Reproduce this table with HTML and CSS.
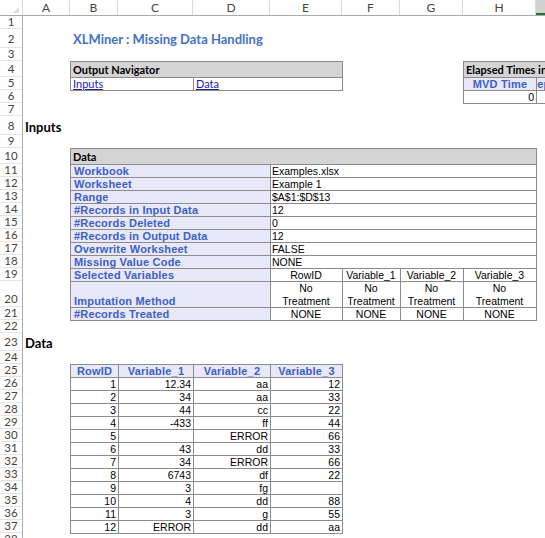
FILE: index.html
```html
<!DOCTYPE html>
<html>
<head>
<meta charset="utf-8">
<link rel="stylesheet" href="styles.css">
</head>
<body>
<div class="sheet">
  <div class="colhead">
    <div class="corner"><span class="tri"></span></div>
    <div class="ch w-a">A</div>
    <div class="ch w-b">B</div>
    <div class="ch w-c">C</div>
    <div class="ch w-d">D</div>
    <div class="ch w-e">E</div>
    <div class="ch w-f">F</div>
    <div class="ch w-g">G</div>
    <div class="ch w-h">H</div>
    <div class="ch ch-sel"></div>
  </div>
  <div class="body">
    <div class="rownums">
      <div class="rn">1</div>
      <div class="rn h19">2</div>
      <div class="rn">3</div>
      <div class="rn h16">4</div>
      <div class="rn">5</div>
      <div class="rn">6</div>
      <div class="rn">7</div>
      <div class="rn h19">8</div>
      <div class="rn">9</div>
      <div class="rn h16">10</div>
      <div class="rn">11</div>
      <div class="rn">12</div>
      <div class="rn">13</div>
      <div class="rn">14</div>
      <div class="rn">15</div>
      <div class="rn">16</div>
      <div class="rn">17</div>
      <div class="rn">18</div>
      <div class="rn">19</div>
      <div class="rn h26">20</div>
      <div class="rn">21</div>
      <div class="rn">22</div>
      <div class="rn h18">23</div>
      <div class="rn">24</div>
      <div class="rn">25</div>
      <div class="rn">26</div>
      <div class="rn">27</div>
      <div class="rn">28</div>
      <div class="rn">29</div>
      <div class="rn">30</div>
      <div class="rn">31</div>
      <div class="rn">32</div>
      <div class="rn">33</div>
      <div class="rn">34</div>
      <div class="rn">35</div>
      <div class="rn">36</div>
      <div class="rn">37</div>
      <div class="rn">38</div>
    </div>
    <div class="grid">
      <div class="title">XLMiner : Missing Data Handling</div>

      <div class="tbl nav">
        <div class="c hd span-all">Output Navigator</div>
        <div class="c link-cell"><a href="#inputs">Inputs</a></div>
        <div class="c link-cell"><a href="#data">Data</a></div>
      </div>

      <div class="tbl elapsed">
        <div class="c hd span-all">Elapsed Times in Milliseconds</div>
        <div class="c lbl ctr">MVD Time</div>
        <div class="c lbl clip-left">Report Time</div>
        <div class="c r">0</div>
        <div class="c"></div>
      </div>

      <div class="heading h-inputs" id="inputs">Inputs</div>

      <div class="tbl inputs">
        <div class="c hd span-all">Data</div>
        <div class="c lbl">Workbook</div><div class="c val span-rest">Examples.xlsx</div>
        <div class="c lbl">Worksheet</div><div class="c val span-rest">Example 1</div>
        <div class="c lbl">Range</div><div class="c val span-rest">$A$1:$D$13</div>
        <div class="c lbl">#Records in Input Data</div><div class="c val span-rest">12</div>
        <div class="c lbl">#Records Deleted</div><div class="c val span-rest">0</div>
        <div class="c lbl">#Records in Output Data</div><div class="c val span-rest">12</div>
        <div class="c lbl">Overwrite Worksheet</div><div class="c val span-rest">FALSE</div>
        <div class="c lbl">Missing Value Code</div><div class="c val span-rest">NONE</div>
        <div class="c lbl">Selected Variables</div>
        <div class="c ctr">RowID</div><div class="c ctr">Variable_1</div><div class="c ctr">Variable_2</div><div class="c ctr">Variable_3</div>
        <div class="c lbl bottom">Imputation Method</div>
        <div class="c ctr two">No<br>Treatment</div><div class="c ctr two">No<br>Treatment</div><div class="c ctr two">No<br>Treatment</div><div class="c ctr two">No<br>Treatment</div>
        <div class="c lbl">#Records Treated</div>
        <div class="c ctr">NONE</div><div class="c ctr">NONE</div><div class="c ctr">NONE</div><div class="c ctr">NONE</div>
      </div>

      <div class="heading h-data" id="data">Data</div>

      <div class="tbl data">
        <div class="c lbl ctr">RowID</div><div class="c lbl ctr">Variable_1</div><div class="c lbl ctr">Variable_2</div><div class="c lbl ctr">Variable_3</div>
        <div class="c r">1</div><div class="c r">12.34</div><div class="c r">aa</div><div class="c r">12</div>
        <div class="c r">2</div><div class="c r">34</div><div class="c r">aa</div><div class="c r">33</div>
        <div class="c r">3</div><div class="c r">44</div><div class="c r">cc</div><div class="c r">22</div>
        <div class="c r">4</div><div class="c r">-433</div><div class="c r">ff</div><div class="c r">44</div>
        <div class="c r">5</div><div class="c r"></div><div class="c r">ERROR</div><div class="c r">66</div>
        <div class="c r">6</div><div class="c r">43</div><div class="c r">dd</div><div class="c r">33</div>
        <div class="c r">7</div><div class="c r">34</div><div class="c r">ERROR</div><div class="c r">66</div>
        <div class="c r">8</div><div class="c r">6743</div><div class="c r">df</div><div class="c r">22</div>
        <div class="c r">9</div><div class="c r">3</div><div class="c r">fg</div><div class="c r"></div>
        <div class="c r">10</div><div class="c r">4</div><div class="c r">dd</div><div class="c r">88</div>
        <div class="c r">11</div><div class="c r">3</div><div class="c r">g</div><div class="c r">55</div>
        <div class="c r">12</div><div class="c r">ERROR</div><div class="c r">dd</div><div class="c r">aa</div>
      </div>
    </div>
  </div>
</div>
</body>
</html>
```

FILE: styles.css
```css
* { box-sizing: border-box; }
html, body { margin: 0; padding: 0; background: #fff; }
body { width: 545px; height: 538px; overflow: hidden; }

.sheet { width: 545px; }

/* column headers */
.colhead {
  display: flex;
  height: 16px;
  border-bottom: 1px solid #ababab;
  font-family: Lato, "Liberation Sans", sans-serif;
  font-size: 12px;
  color: #444;
}
.corner {
  width: 23px;
  flex: none;
  position: relative;
  border-right: 1px solid #dadada;
}
.tri {
  position: absolute;
  right: 3px;
  bottom: 2px;
  width: 0;
  height: 0;
  border-left: 6px solid transparent;
  border-bottom: 6px solid #dcdcdc;
}
.ch {
  flex: none;
  text-align: center;
  line-height: 15px;
  border-right: 1px solid #dadada;
}
.w-a { width: 47px; }
.w-b { width: 48px; }
.w-c { width: 75px; }
.w-d { width: 77px; }
.w-e { width: 72px; }
.w-f { width: 58px; }
.w-g { width: 63px; }
.w-h { width: 73px; }
.ch-sel {
  flex: 1;
  background: #d2d2d2;
  border-bottom: 2px solid #217346;
  border-right: none;
}

.body { display: flex; }

/* row numbers */
.rownums {
  width: 23px;
  flex: none;
  border-right: 1px solid #ababab;
  font-family: Lato, "Liberation Sans", sans-serif;
  font-size: 11.5px;
  color: #444;
}
.rn {
  height: 13px;
  line-height: 12px;
  text-align: center;
  border-bottom: 1px solid #e4e4e4;
}
.rn.h16 { height: 16px; line-height: 16px; }
.rn.h18 { height: 18px; line-height: 18px; }
.rn.h19 { height: 19px; line-height: 19px; }
.rn.h26 { height: 26px; line-height: 36px; }

/* sheet body */
.grid {
  flex: 1;
  display: grid;
  grid-template-columns: 47px 48px 75px 77px 72px 58px 63px 73px 1fr;
  grid-template-rows:
    13px 19px 13px 16px 13px 13px 13px 19px 13px 16px
    13px 13px 13px 13px 13px 13px 13px 13px 13px
    26px 13px 13px 18px 13px
    13px 13px 13px 13px 13px 13px 13px 13px 13px 13px 13px 13px 13px 13px;
  min-width: 0;
  overflow: hidden;
}

.title {
  grid-row: 2;
  grid-column: 2 / 9;
  align-self: center;
  padding-left: 3px;
  font-family: Lato, "Liberation Sans", sans-serif;
  font-weight: bold;
  font-size: 13px;
  color: #4472c4;
  white-space: nowrap;
}

.heading {
  grid-column: 1 / 4;
  align-self: end;
  padding-left: 2px;
  font-family: Lato, "Liberation Sans", sans-serif;
  font-weight: bold;
  font-size: 13px;
  line-height: 16px;
  color: #000;
}
.h-inputs { grid-row: 8; }
.h-data { grid-row: 23; }

/* tables built from gridlines */
.tbl {
  display: grid;
  gap: 1px;
  padding: 1px;
  background: #8c8c8c;
  align-self: start;
  justify-self: start;
}
.nav {
  grid-row: 4 / 6;
  grid-column: 2 / 6;
  grid-template-columns: 122px 148px;
  grid-template-rows: 15px 12px;
}
.elapsed {
  grid-row: 4 / 7;
  grid-column: 8 / 10;
  grid-template-columns: 72px 40px;
  grid-template-rows: 15px 12px 12px;
}
.inputs {
  grid-row: 10 / 22;
  grid-column: 2 / 10;
  grid-template-columns: 199px 71px 57px 62px 72px;
  grid-template-rows: 15px repeat(9, 12px) 25px 12px;
}
.data {
  grid-row: 25 / 38;
  grid-column: 2 / 6;
  grid-template-columns: 47px 74px 76px 71px;
  grid-template-rows: repeat(13, 12px);
}

.c {
  background: #fff;
  font-family: "Liberation Sans", Arial, sans-serif;
  font-size: 10.5px;
  line-height: 12px;
  padding: 0 2px 0 1px;
  white-space: nowrap;
  overflow: hidden;
  color: #000;
}
.span-all { grid-column: 1 / -1; }
.span-rest { grid-column: 2 / -1; }
.r { text-align: right; }
.ctr { text-align: center; }

.hd {
  background: #d4d4d4;
  font-family: Lato, "Liberation Sans", sans-serif;
  font-weight: bold;
  font-size: 11px;
  line-height: 15px;
  padding-left: 2px;
}
.lbl {
  background: #e8e8f9;
  color: #3d60c6;
  font-weight: bold;
  font-size: 11px;
  letter-spacing: 0.2px;
  padding-left: 3px;
}
.lbl.ctr { padding: 0; }
.clip-left { text-indent: -8px; padding-left: 0; }
.bottom { display: flex; align-items: flex-end; }
.two { line-height: 12.5px; }

.link-cell {
  font-family: Lato, "Liberation Sans", sans-serif;
  font-size: 11px;
  padding-left: 2px;
}
.link-cell a { color: #1a1aa8; text-decoration: underline; }
```
